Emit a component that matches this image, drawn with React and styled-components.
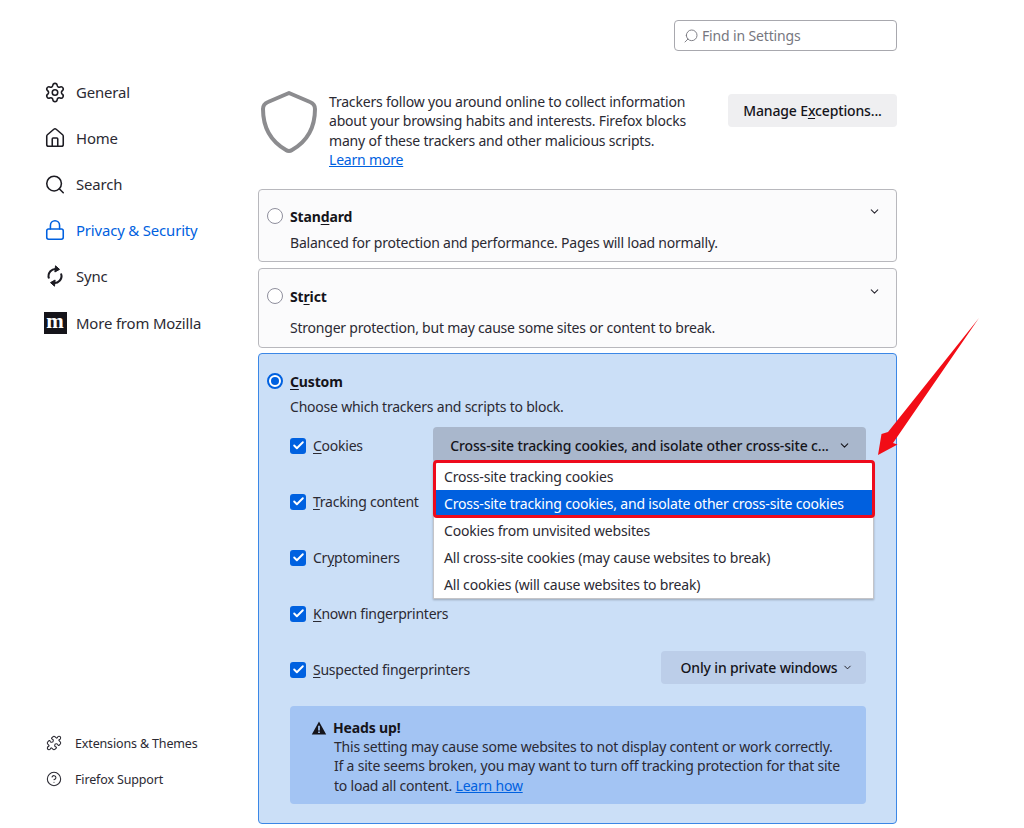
import React from "react";
import styled, { createGlobalStyle } from "styled-components";
import { Settings, Home, Search, Lock, Puzzle, CircleHelp, ChevronDown, Check } from "lucide-react";

const GlobalStyle = createGlobalStyle`
    * {
        box-sizing: border-box;
    }
    html, body {
        margin: 0;
        background: #ffffff;
    }
    body {
        font-family: "Noto Sans", "Open Sans", sans-serif;
        font-size: 14px;
        letter-spacing: -0.15px;
        color: #15141a;
    }
`;

const Root = styled.div`
    position: relative;
    width: 1024px;
    height: 828px;
    overflow: hidden;
    display: flex;
`;

const Sidebar = styled.nav`
    width: 258px;
    flex: none;
    padding: 69px 0 31px 44px;
    display: flex;
    flex-direction: column;
    justify-content: space-between;
`;

const NavList = styled.div`
    display: flex;
    flex-direction: column;
`;

const NavItem = styled.div`
    height: 46.1px;
    display: flex;
    align-items: center;
    gap: 10px;
    font-size: 14.9px;
    color: ${(p) => (p.$active ? "#0061e0" : "#2b2a33")};
`;

const NavIcon = styled.span`
    width: 22px;
    height: 24px;
    display: flex;
    align-items: center;
    justify-content: center;
    color: ${(p) => (p.$active ? "#0061e0" : "#1c1b22")};
`;

const MozillaMark = styled.span`
    width: 23px;
    height: 22px;
    flex: none;
    background: #15141a;
    color: #ffffff;
    font-family: "Liberation Serif", serif;
    font-weight: 700;
    font-size: 21px;
    line-height: 19px;
    display: flex;
    justify-content: center;
`;

const FooterItem = styled.div`
    height: 36px;
    display: flex;
    align-items: center;
    gap: 13px;
    padding-left: 2px;
    font-size: 12.5px;
    color: #2b2a33;
`;

const Main = styled.main`
    width: 639px;
    flex: none;
    padding-top: 20px;
`;

const SearchRow = styled.div`
    display: flex;
    justify-content: flex-end;
`;

const SearchBox = styled.div`
    width: 223px;
    height: 31px;
    border: 1px solid #a8a8ae;
    border-radius: 4px;
    display: flex;
    align-items: center;
    gap: 3px;
    padding-left: 8px;
    color: #77777f;
    font-size: 14px;
`;

const Intro = styled.section`
    height: 138px;
    padding-top: 39px;
    display: flex;
    align-items: flex-start;
`;

const ShieldWrap = styled.div`
    width: 71px;
    flex: none;
    padding-left: 2px;
`;

const IntroText = styled.div`
    width: 370px;
    line-height: 19.4px;
    padding-top: 2px;
    letter-spacing: -0.19px;
    color: #2b2a33;
`;

const Link = styled.a`
    color: #0061e0;
    text-decoration: underline;
`;

const GhostButton = styled.div`
    margin: 4px 0 0 auto;
    width: 169px;
    height: 33px;
    border-radius: 4px;
    background: #efeff1;
    display: flex;
    align-items: center;
    justify-content: center;
    font-weight: 500;
    color: #15141a;
`;

const Cards = styled.div`
    display: flex;
    flex-direction: column;
    gap: 6px;
`;

const Card = styled.div`
    position: relative;
    height: ${(p) => p.$height}px;
    margin-top: ${(p) => (p.$selected ? "-1px" : "0")};
    padding: ${(p) => p.$top}px 9px 0 8px;
    border-radius: 4px;
    border: 1px solid ${(p) => (p.$selected ? "#3b87e6" : "#b8b8bd")};
    background: ${(p) => (p.$selected ? "#cbdff7" : "#fbfbfc")};
`;

const CardHead = styled.div`
    display: flex;
    align-items: center;
    gap: 7px;
    height: 20px;
`;

const Radio = styled.span`
    width: 16px;
    height: 16px;
    flex: none;
    border-radius: 50%;
    background: #ffffff;
    border: ${(p) => (p.$checked ? "2px solid #0061e0" : "1.5px solid #8f8f9d")};
    display: flex;
    align-items: center;
    justify-content: center;
    &::after {
        content: "";
        width: 8px;
        height: 8px;
        border-radius: 50%;
        background: ${(p) => (p.$checked ? "#0061e0" : "transparent")};
    }
`;

const CardTitle = styled.span`
    font-weight: 700;
    flex: 1;
    color: #15141a;
`;

const CardChevron = styled.span`
    display: flex;
    margin: -10px 6px 0 0;
    color: #2b2a33;
`;

const CardText = styled.div`
    margin-top: ${(p) => p.$gap}px;
    padding-left: 23px;
    line-height: 20px;
    letter-spacing: -0.22px;
    color: #2b2a33;
`;

const Key = styled.span`
    text-decoration: underline;
    text-underline-offset: 2px;
`;

const Rows = styled.div`
    margin: 10px 21px 0 23px;
    display: flex;
    flex-direction: column;
    gap: 20px;
`;

const Row = styled.div`
    position: relative;
    height: 36px;
    display: flex;
    align-items: center;
`;

const CheckBox = styled.span`
    width: 16px;
    height: 16px;
    flex: none;
    margin-top: 1px;
    border-radius: 3px;
    background: #0061e0;
    color: #ffffff;
    display: flex;
    align-items: center;
    justify-content: center;
`;

const RowLabel = styled.span`
    margin-left: 7px;
    letter-spacing: -0.25px;
    color: #2b2a33;
`;

const SelectBox = styled.div`
    margin-left: auto;
    align-self: flex-start;
    width: ${(p) => p.$width}px;
    height: ${(p) => p.$height}px;
    padding-left: ${(p) => p.$indent}px;
    border-radius: 4px;
    background: ${(p) => (p.$open ? "#a9b7cc" : "#bccee9")};
    display: flex;
    align-items: center;
    justify-content: center;
    gap: ${(p) => p.$gap}px;
    font-weight: 500;
    color: #15141a;
    white-space: nowrap;
`;

const Menu = styled.div`
    position: absolute;
    top: 36px;
    left: 143px;
    width: 441px;
    background: #ffffff;
    border: 1px solid #c4c4c8;
    border-top: none;
    box-shadow: 0 1px 2px rgba(0, 0, 0, 0.25);
    z-index: 2;
`;

const MenuItem = styled.div`
    height: 27px;
    padding-left: 10px;
    display: flex;
    align-items: center;
    white-space: nowrap;
    letter-spacing: -0.18px;
    background: ${(p) => (p.$active ? "#0060df" : "transparent")};
    color: ${(p) => (p.$active ? "#ffffff" : "#2b2a33")};
`;

const Highlight = styled.div`
    position: absolute;
    top: -3px;
    left: -1px;
    width: 442px;
    height: 58px;
    border: 3px solid #ee0b1c;
    border-radius: 4px;
    pointer-events: none;
`;

const Warning = styled.div`
    margin: 19px 21px 0 23px;
    height: 98px;
    border-radius: 4px;
    background: #a3c4f3;
    padding: 12px 0 0 21px;
    color: #2b2a33;
    line-height: 19.5px;
`;

const WarningHead = styled.div`
    display: flex;
    align-items: center;
    gap: 6px;
    font-weight: 700;
    color: #15141a;
`;

const WarningBody = styled.div`
    padding-left: 23px;
    margin-top: -1px;
    letter-spacing: -0.21px;
`;

const ArrowOverlay = styled.svg`
    position: absolute;
    left: 0;
    top: 0;
    pointer-events: none;
    z-index: 3;
`;

function SyncIcon() {
    return (
        <svg width="22" height="24" viewBox="0 0 22 24" fill="none" stroke="#1c1b22" strokeWidth="2">
            <path d="M5 14.5a7 7 0 0 1 8.5-9.2" />
            <path d="M17 9.5a7 7 0 0 1-8.5 9.2" />
            <path d="M11.5 1.8l4 3.6-4.6 2.6z" fill="#1c1b22" strokeWidth="1" />
            <path d="M10.5 22.2l-4-3.6 4.6-2.6z" fill="#1c1b22" strokeWidth="1" />
        </svg>
    );
}

function ShieldIcon() {
    return (
        <svg width="58" height="64" viewBox="0 0 58 64" fill="none">
            <path
                d="M29 3 L50 12 Q55 14 55 19 C55 38 46 52 32 60 Q29 62 26 60 C12 52 3 38 3 19 Q3 14 8 12 Z"
                stroke="#8c8c8f"
                strokeWidth="4"
                strokeLinejoin="round"
            />
        </svg>
    );
}

const navItems = [
    { label: "General", icon: <Settings size={25} strokeWidth={1.7} /> },
    { label: "Home", icon: <Home size={26} strokeWidth={1.7} /> },
    { label: "Search", icon: <Search size={25} strokeWidth={1.7} /> },
    { label: "Privacy & Security", icon: <Lock size={26} strokeWidth={1.7} />, active: true },
    { label: "Sync", icon: <SyncIcon /> },
    { label: "More from Mozilla", icon: <MozillaMark>m</MozillaMark> },
];

const menuItems = [
    "Cross-site tracking cookies",
    "Cross-site tracking cookies, and isolate other cross-site cookies",
    "Cookies from unvisited websites",
    "All cross-site cookies (may cause websites to break)",
    "All cookies (will cause websites to break)",
];

function Tracker({ before, letter, after, children }) {
    return (
        <Row>
            <CheckBox>
                <Check size={13} strokeWidth={3.5} />
            </CheckBox>
            <RowLabel>
                {before}
                <Key>{letter}</Key>
                {after}
            </RowLabel>
            {children}
        </Row>
    );
}

export default function App() {
    return (
        <Root>
            <GlobalStyle />
            <Sidebar>
                <NavList>
                    {navItems.map((item) => (
                        <NavItem key={item.label} $active={item.active}>
                            <NavIcon $active={item.active}>{item.icon}</NavIcon>
                            {item.label}
                        </NavItem>
                    ))}
                </NavList>
                <NavList>
                    <FooterItem>
                        <Puzzle size={16} strokeWidth={1.6} />
                        Extensions &amp; Themes
                    </FooterItem>
                    <FooterItem>
                        <CircleHelp size={16} strokeWidth={1.6} />
                        Firefox Support
                    </FooterItem>
                </NavList>
            </Sidebar>
            <Main>
                <SearchRow>
                    <SearchBox>
                        <Search size={16} strokeWidth={1.4} style={{ transform: "scaleX(-1)" }} />
                        Find in Settings
                    </SearchBox>
                </SearchRow>
                <Intro>
                    <ShieldWrap>
                        <ShieldIcon />
                    </ShieldWrap>
                    <IntroText>
                        Trackers follow you around online to collect information
                        <br />
                        about your browsing habits and interests. Firefox blocks
                        <br />
                        many of these trackers and other malicious scripts.
                        <br />
                        <Link>Learn more</Link>
                    </IntroText>
                    <GhostButton>
                        <span>
                            Manage E<Key>x</Key>ceptions...
                        </span>
                    </GhostButton>
                </Intro>
                <Cards>
                    <Card $height={73} $top={16}>
                        <CardHead>
                            <Radio />
                            <CardTitle>
                                Stan<Key>d</Key>ard
                            </CardTitle>
                            <CardChevron>
                                <ChevronDown size={13} />
                            </CardChevron>
                        </CardHead>
                        <CardText $gap={7}>Balanced for protection and performance. Pages will load normally.</CardText>
                    </Card>
                    <Card $height={80} $top={17}>
                        <CardHead>
                            <Radio />
                            <CardTitle>
                                St<Key>r</Key>ict
                            </CardTitle>
                            <CardChevron>
                                <ChevronDown size={13} />
                            </CardChevron>
                        </CardHead>
                        <CardText $gap={12}>Stronger protection, but may cause some sites or content to break.</CardText>
                    </Card>
                    <Card $height={471} $top={17} $selected>
                        <CardHead>
                            <Radio $checked />
                            <CardTitle>
                                <Key>C</Key>ustom
                            </CardTitle>
                        </CardHead>
                        <CardText $gap={6}>Choose which trackers and scripts to block.</CardText>
                        <Rows>
                            <Tracker letter="C" after="ookies">
                                <SelectBox $width={433} $height={36} $gap={9} $indent={2} $open>
                                    Cross-site tracking cookies, and isolate other cross-site c...
                                    <ChevronDown size={13} />
                                </SelectBox>
                                <Menu>
                                    {menuItems.map((text, i) => (
                                        <MenuItem key={text} $active={i === 1}>
                                            {text}
                                        </MenuItem>
                                    ))}
                                    <Highlight />
                                </Menu>
                            </Tracker>
                            <Tracker letter="T" after="racking content" />
                            <Tracker before="Cr" letter="y" after="ptominers" />
                            <Tracker letter="K" after="nown fingerprinters" />
                            <Tracker letter="S" after="uspected fingerprinters">
                                <SelectBox $width={205} $height={33} $gap={4} $indent={6}>
                                    Only in private windows
                                    <ChevronDown size={11} />
                                </SelectBox>
                            </Tracker>
                        </Rows>
                        <Warning>
                            <WarningHead>
                                <svg width="16" height="14" viewBox="0 0 14 13">
                                    <path
                                        fillRule="evenodd"
                                        d="M7 0.5 L13.7 12.5 H0.3 Z M6.2 4.5 V8.8 H7.8 V4.5 Z M6.2 9.8 V11.2 H7.8 V9.8 Z"
                                        fill="#15141a"
                                    />
                                </svg>
                                Heads up!
                            </WarningHead>
                            <WarningBody>
                                This setting may cause some websites to not display content or work correctly.
                                <br />
                                If a site seems broken, you may want to turn off tracking protection for that site
                                <br />
                                to load all content. <Link>Learn how</Link>
                            </WarningBody>
                        </Warning>
                    </Card>
                </Cards>
            </Main>
            <ArrowOverlay width="1024" height="828" viewBox="0 0 1024 828">
                <path d="M979 318 L893 443 L897.5 444.5 L878 455 L881.5 434 L888 432 Z" fill="#f20d16" />
            </ArrowOverlay>
        </Root>
    );
}
